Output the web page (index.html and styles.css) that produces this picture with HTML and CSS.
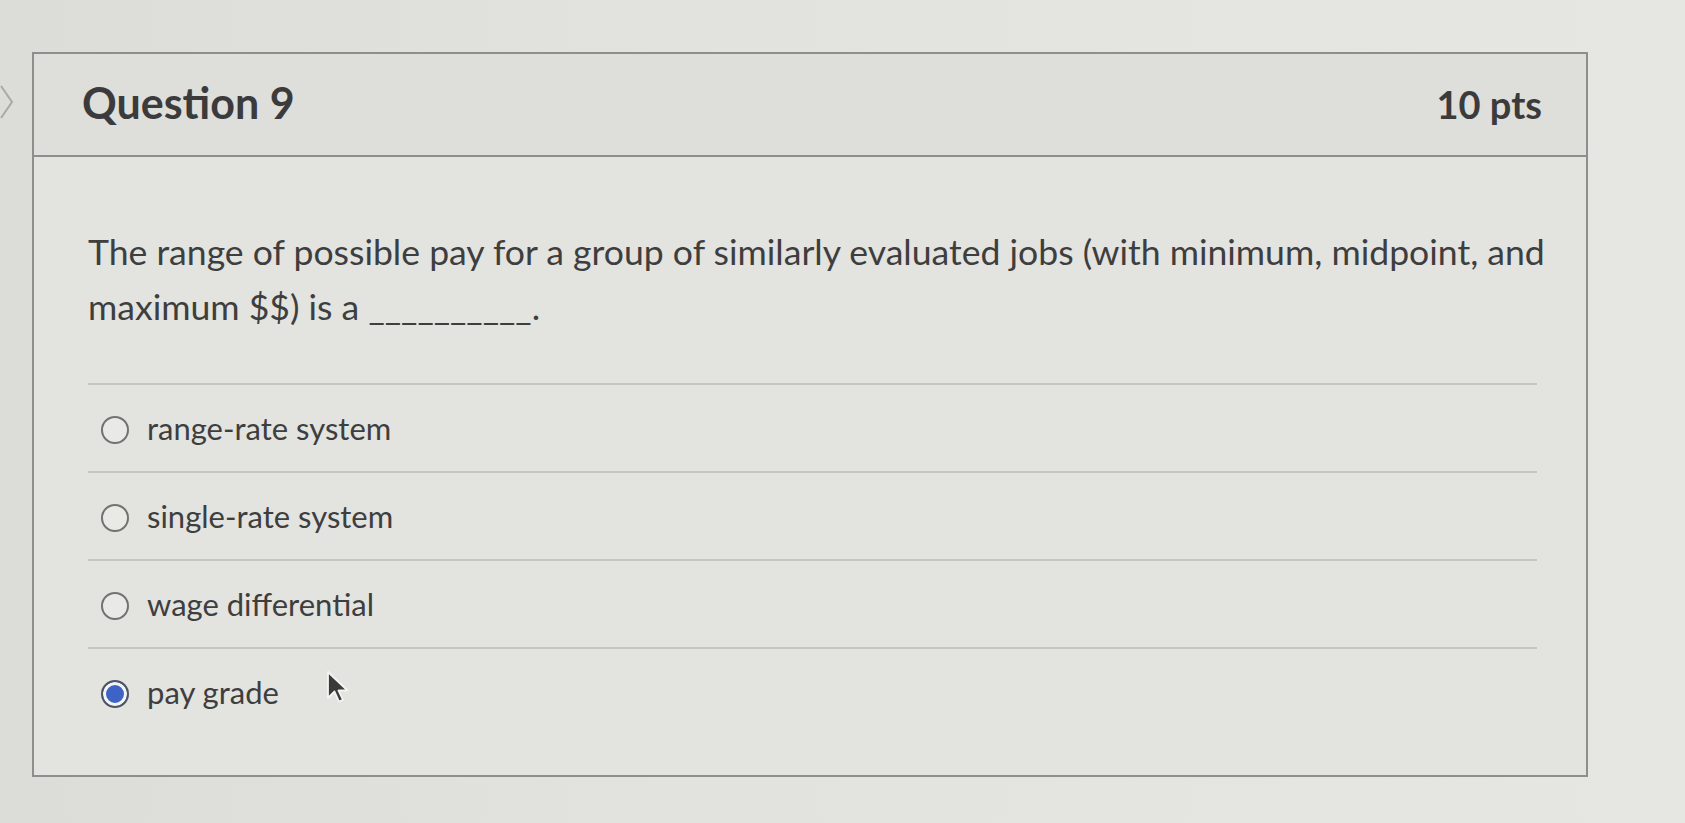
FILE: index.html
```html
<!DOCTYPE html>
<html lang="en">
<head>
<meta charset="utf-8">
<title>Question 9</title>
<link rel="stylesheet" href="styles.css">
</head>
<body>
<div class="page">
  <div class="gutter">
    <svg class="chevron" width="14" height="34" viewBox="0 0 14 34"><polyline points="1,1 12,17 1,33" fill="none" stroke="#a9a9a6" stroke-width="2"/></svg>
  </div>
  <section class="card">
    <header class="card-head">
      <h2 class="q-title">Question 9</h2>
      <span class="q-pts">10 pts</span>
    </header>
    <div class="card-body">
      <p class="q-text">The range of possible pay for a group of similarly evaluated jobs (with minimum, midpoint, and maximum $$) is a __________.</p>
      <div class="answers">
        <label class="answer"><span class="radio"></span><span class="answer-text">range-rate system</span></label>
        <label class="answer"><span class="radio"></span><span class="answer-text">single-rate system</span></label>
        <label class="answer"><span class="radio"></span><span class="answer-text">wage differential</span></label>
        <label class="answer"><span class="radio checked"></span><span class="answer-text">pay grade</span>
          <svg class="cursor" width="26" height="36" viewBox="0 0 26 36"><path d="M2 2 L2 28 L8.5 21.5 L13 31.5 L17 29.8 L12.5 20.5 L21.5 20.5 Z" fill="#3a3a3a" stroke="#f4f4f2" stroke-width="1.8" stroke-linejoin="round"/></svg>
        </label>
      </div>
    </div>
  </section>
</div>
</body>
</html>
```

FILE: styles.css
```css
html, body {
  margin: 0;
  padding: 0;
}

body {
  background: linear-gradient(90deg, #dcdcd8 0%, #e2e2df 40%, #e6e6e3 100%);
  font-family: Lato, "Open Sans", sans-serif;
  color: #3d3d3d;
  width: 1685px;
  height: 823px;
  overflow: hidden;
}

.page {
  display: flex;
  padding-top: 52px;
}

.gutter {
  width: 32px;
  flex: none;
}

.chevron {
  display: block;
  margin-top: 33px;
}

.card {
  width: 1556px;
  height: 725px;
  box-sizing: border-box;
  border: 2px solid #8e8e8c;
  background: #e3e3e0;
  display: flex;
  flex-direction: column;
}

.card-head {
  display: flex;
  justify-content: space-between;
  align-items: baseline;
  padding: 23px 44px 25px 48px;
  border-bottom: 2px solid #8e8e8c;
  background: #dededb;
}

.q-title {
  margin: 0;
  font-size: 43px;
  line-height: 52px;
  font-weight: 700;
  color: #3b3b3b;
}

.q-pts {
  font-size: 38px;
  line-height: 52px;
  font-weight: 700;
  color: #3b3b3b;
}

.card-body {
  padding: 67px 15px 0 54px;
}

.q-text {
  margin: 0 0 49px 0;
  font-size: 35.6px;
  line-height: 55px;
  color: #3e3e3e;
}

.answers {
  display: flex;
  flex-direction: column;
  margin-right: 34px;
}

.answer {
  display: flex;
  align-items: center;
  height: 88px;
  border-top: 2px solid #c6c6c3;
  padding-left: 13px;
  box-sizing: border-box;
  font-size: 31px;
  color: #3e3e3e;
}

.radio {
  width: 28px;
  height: 28px;
  box-sizing: border-box;
  border: 2px solid #727270;
  border-radius: 50%;
  background: #e9e9e6;
  margin-right: 18px;
  margin-top: 4px;
  flex: none;
}

.radio.checked {
  border: 2px solid #4f5565;
  background: #3d63c6;
  box-shadow: inset 0 0 0 3px #f4f4f4;
}

.answer-text {
  line-height: 38px;
}

.cursor {
  margin-left: 47px;
  align-self: flex-start;
  margin-top: 21px;
  flex: none;
}
```
